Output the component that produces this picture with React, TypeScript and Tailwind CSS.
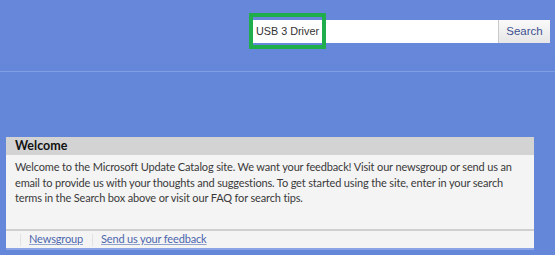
export default function App() {
  return (
    <div
      className="relative w-[555px] h-[255px] overflow-hidden bg-[#6587d9] flex flex-col"
      style={{ fontFamily: 'Lato, "Open Sans", sans-serif' }}
    >
      {/* top bar with search */}
      <div className="h-[72px] shrink-0 bg-gradient-to-b from-[#6787db] to-[#6587d9] border-b border-[#7f9ee3] flex justify-end pr-[5px] pt-[20px]">
        <div className="relative flex h-[23px]">
          <div
            className="w-[245px] h-full bg-white pl-[3px] text-[10.8px] leading-[23px] text-[#333]"
            style={{ fontFamily: '"Liberation Sans", Arial, sans-serif' }}
          >
            USB 3 Driver
          </div>
          <button
            type="button"
            className="w-[52px] h-full border-l border-[#c9c9c9] bg-gradient-to-b from-[#fafafa] to-[#e6e6e6] text-[11.5px] text-[#3d4f8f]"
            style={{ fontFamily: '"Liberation Sans", Arial, sans-serif' }}
          >
            Search
          </button>
          {/* highlight annotation */}
          <div className="absolute left-[-4px] top-[-7px] w-[77px] h-[36px] border-[4px] border-[#1fae4b] pointer-events-none" />
        </div>
      </div>

      <div className="h-[65px] shrink-0" />

      {/* welcome panel */}
      <div className="ml-[6px] w-[528px] h-[113px] shrink-0 bg-[#f4f4f4] flex flex-col border-b-2 border-[#8aa4e6]">
        <div className="h-[18px] bg-[#d3d3d3] pl-[9px] text-[12.5px] font-bold leading-[18px] text-[#111]">
          Welcome
        </div>
        <div className="flex-1 px-[9px] pt-[4px] text-[11px] tracking-[-0.15px] leading-[15.5px] text-[#3a3a3a] whitespace-nowrap">
          Welcome to the Microsoft Update Catalog site. We want your feedback! Visit our newsgroup or send us an
          <br />
          email to provide us with your thoughts and suggestions. To get started using the site, enter in your search
          <br />
          terms in the Search box above or visit our FAQ for search tips.
        </div>
        <div className="h-[2px] bg-[#d0d0d0]" />
        <div className="h-[17px] flex items-center pl-[14px] text-[11px] tracking-[-0.15px] text-[#4b66ad]">
          <span className="w-px h-[12px] bg-[#e2e2e2]" />
          <a href="#" className="ml-[8px] underline decoration-[#8fa0cc]">Newsgroup</a>
          <span className="ml-[9px] w-px h-[12px] bg-[#e2e2e2]" />
          <a href="#" className="ml-[8px] underline decoration-[#8fa0cc]">Send us your feedback</a>
        </div>
      </div>
    </div>
  );
}
